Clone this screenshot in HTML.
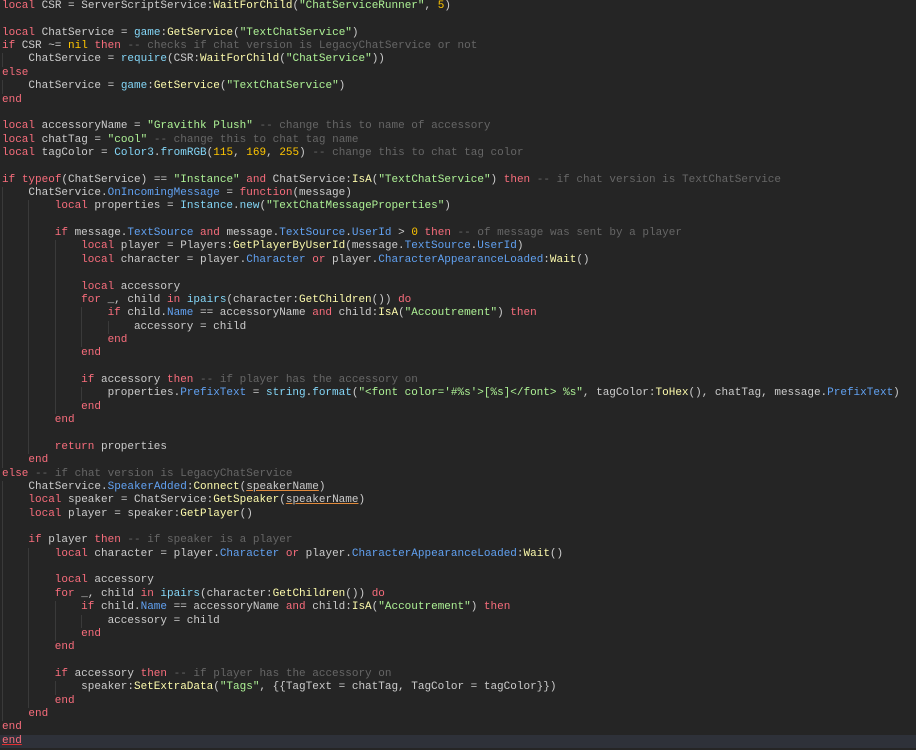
<!DOCTYPE html>
<html><head><meta charset="utf-8"><style>
html,body{margin:0;padding:0;background:#252525;width:916px;height:750px;overflow:hidden}
.code{margin:0;padding:0 0 0 2px;font-family:"Liberation Mono",monospace;font-size:11px;line-height:13.36px;color:#cccccc;white-space:normal}
.l{display:block;height:13.36px;white-space:pre}
.hl{background:#2e3139;margin-left:-2px;padding-left:2px}
i{font-style:normal;display:inline-block;width:26.4px;height:13.36px;vertical-align:top;box-shadow:inset 1px 0 0 #3a3a3a}
.k{color:#f86d7c}.b{color:#84d6f7}.s{color:#adf195}.c{color:#666666}.m{color:#fdfbac}.p{color:#61a1f1}.n{color:#ffc600}
.u{text-decoration:underline;text-decoration-color:#e08a3c}
.r{text-decoration:underline;text-decoration-color:#e03030}
</style></head><body><div class="code">
<span class="l"><span class="k">local</span> CSR = ServerScriptService:<span class="m">WaitForChild</span>(<span class="s">"ChatServiceRunner"</span>, <span class="n">5</span>)</span>
<span class="l"></span>
<span class="l"><span class="k">local</span> ChatService = <span class="b">game</span>:<span class="m">GetService</span>(<span class="s">"TextChatService"</span>)</span>
<span class="l"><span class="k">if</span> CSR ~= <span class="n">nil</span> <span class="k">then</span> <span class="c">-- checks if chat version is LegacyChatService or not</span></span>
<span class="l"><i></i>ChatService = <span class="b">require</span>(CSR:<span class="m">WaitForChild</span>(<span class="s">"ChatService"</span>))</span>
<span class="l"><span class="k">else</span></span>
<span class="l"><i></i>ChatService = <span class="b">game</span>:<span class="m">GetService</span>(<span class="s">"TextChatService"</span>)</span>
<span class="l"><span class="k">end</span></span>
<span class="l"></span>
<span class="l"><span class="k">local</span> accessoryName = <span class="s">"Gravithk Plush"</span> <span class="c">-- change this to name of accessory</span></span>
<span class="l"><span class="k">local</span> chatTag = <span class="s">"cool"</span> <span class="c">-- change this to chat tag name</span></span>
<span class="l"><span class="k">local</span> tagColor = <span class="b">Color3</span>.<span class="b">fromRGB</span>(<span class="n">115</span>, <span class="n">169</span>, <span class="n">255</span>) <span class="c">-- change this to chat tag color</span></span>
<span class="l"></span>
<span class="l"><span class="k">if</span> <span class="k">typeof</span>(ChatService) == <span class="s">"Instance"</span> <span class="k">and</span> ChatService:<span class="m">IsA</span>(<span class="s">"TextChatService"</span>) <span class="k">then</span> <span class="c">-- if chat version is TextChatService</span></span>
<span class="l"><i></i>ChatService.<span class="p">OnIncomingMessage</span> = <span class="k">function</span>(message)</span>
<span class="l"><i></i><i></i><span class="k">local</span> properties = <span class="b">Instance</span>.<span class="b">new</span>(<span class="s">"TextChatMessageProperties"</span>)</span>
<span class="l"><i></i><i></i></span>
<span class="l"><i></i><i></i><span class="k">if</span> message.<span class="p">TextSource</span> <span class="k">and</span> message.<span class="p">TextSource</span>.<span class="p">UserId</span> &gt; <span class="n">0</span> <span class="k">then</span> <span class="c">-- of message was sent by a player</span></span>
<span class="l"><i></i><i></i><i></i><span class="k">local</span> player = Players:<span class="m">GetPlayerByUserId</span>(message.<span class="p">TextSource</span>.<span class="p">UserId</span>)</span>
<span class="l"><i></i><i></i><i></i><span class="k">local</span> character = player.<span class="p">Character</span> <span class="k">or</span> player.<span class="p">CharacterAppearanceLoaded</span>:<span class="m">Wait</span>()</span>
<span class="l"><i></i><i></i><i></i></span>
<span class="l"><i></i><i></i><i></i><span class="k">local</span> accessory</span>
<span class="l"><i></i><i></i><i></i><span class="k">for</span> _, child <span class="k">in</span> <span class="b">ipairs</span>(character:<span class="m">GetChildren</span>()) <span class="k">do</span></span>
<span class="l"><i></i><i></i><i></i><i></i><span class="k">if</span> child.<span class="p">Name</span> == accessoryName <span class="k">and</span> child:<span class="m">IsA</span>(<span class="s">"Accoutrement"</span>) <span class="k">then</span></span>
<span class="l"><i></i><i></i><i></i><i></i><i></i>accessory = child</span>
<span class="l"><i></i><i></i><i></i><i></i><span class="k">end</span></span>
<span class="l"><i></i><i></i><i></i><span class="k">end</span></span>
<span class="l"><i></i><i></i><i></i></span>
<span class="l"><i></i><i></i><i></i><span class="k">if</span> accessory <span class="k">then</span> <span class="c">-- if player has the accessory on</span></span>
<span class="l"><i></i><i></i><i></i><i></i>properties.<span class="p">PrefixText</span> = <span class="b">string</span>.<span class="b">format</span>(<span class="s">"&lt;font color='#%s'&gt;[%s]&lt;/font&gt; %s"</span>, tagColor:<span class="m">ToHex</span>(), chatTag, message.<span class="p">PrefixText</span>)</span>
<span class="l"><i></i><i></i><i></i><span class="k">end</span></span>
<span class="l"><i></i><i></i><span class="k">end</span></span>
<span class="l"><i></i><i></i></span>
<span class="l"><i></i><i></i><span class="k">return</span> properties</span>
<span class="l"><i></i><span class="k">end</span></span>
<span class="l"><span class="k">else</span> <span class="c">-- if chat version is LegacyChatService</span></span>
<span class="l"><i></i>ChatService.<span class="p">SpeakerAdded</span>:<span class="m">Connect</span>(<span class="u">speakerName</span>)</span>
<span class="l"><i></i><span class="k">local</span> speaker = ChatService:<span class="m">GetSpeaker</span>(<span class="u">speakerName</span>)</span>
<span class="l"><i></i><span class="k">local</span> player = speaker:<span class="m">GetPlayer</span>()</span>
<span class="l"><i></i></span>
<span class="l"><i></i><span class="k">if</span> player <span class="k">then</span> <span class="c">-- if speaker is a player</span></span>
<span class="l"><i></i><i></i><span class="k">local</span> character = player.<span class="p">Character</span> <span class="k">or</span> player.<span class="p">CharacterAppearanceLoaded</span>:<span class="m">Wait</span>()</span>
<span class="l"><i></i><i></i></span>
<span class="l"><i></i><i></i><span class="k">local</span> accessory</span>
<span class="l"><i></i><i></i><span class="k">for</span> _, child <span class="k">in</span> <span class="b">ipairs</span>(character:<span class="m">GetChildren</span>()) <span class="k">do</span></span>
<span class="l"><i></i><i></i><i></i><span class="k">if</span> child.<span class="p">Name</span> == accessoryName <span class="k">and</span> child:<span class="m">IsA</span>(<span class="s">"Accoutrement"</span>) <span class="k">then</span></span>
<span class="l"><i></i><i></i><i></i><i></i>accessory = child</span>
<span class="l"><i></i><i></i><i></i><span class="k">end</span></span>
<span class="l"><i></i><i></i><span class="k">end</span></span>
<span class="l"><i></i><i></i></span>
<span class="l"><i></i><i></i><span class="k">if</span> accessory <span class="k">then</span> <span class="c">-- if player has the accessory on</span></span>
<span class="l"><i></i><i></i><i></i>speaker:<span class="m">SetExtraData</span>(<span class="s">"Tags"</span>, {{TagText = chatTag, TagColor = tagColor}})</span>
<span class="l"><i></i><i></i><span class="k">end</span></span>
<span class="l"><i></i><span class="k">end</span></span>
<span class="l"><span class="k">end</span></span>
<span class="l hl"><span class="k r">end</span></span>
</div></body></html>
